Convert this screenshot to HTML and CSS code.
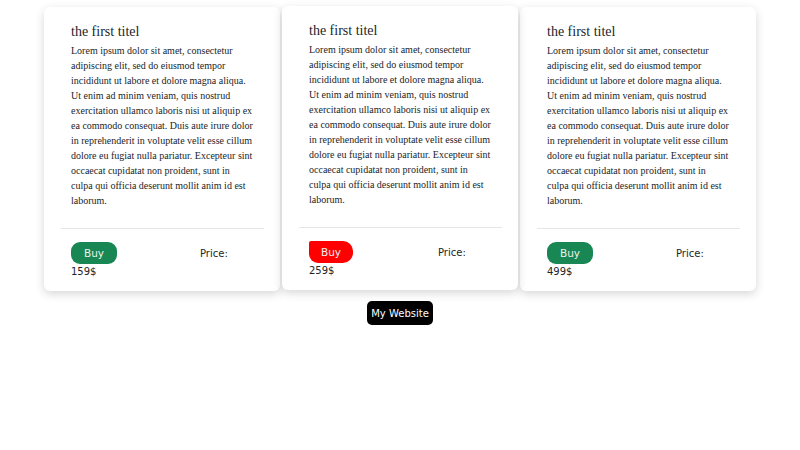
FILE: index.html
```html
<!DOCTYPE html>
<html lang="en">
<head>
    <meta charset="UTF-8">
    <meta name="viewport" content="width=device-width, initial-scale=1.0">
    <title>Cards</title>
    <link rel="stylesheet" href="styles.css">
</head>
<body>

<!-- Product cards -->
<div class="cards">
    <div class="card">
        <div class="card-body">
            <h5 class="card-title">the first titel</h5>
            <p class="card-text">Lorem ipsum dolor sit amet, consectetur adipiscing elit, sed do eiusmod tempor incididunt ut labore et dolore magna aliqua. Ut enim ad minim veniam, quis nostrud exercitation ullamco laboris nisi ut aliquip ex ea commodo consequat. Duis aute irure dolor in reprehenderit in voluptate velit esse cillum dolore eu fugiat nulla pariatur. Excepteur sint occaecat cupidatat non proident, sunt in culpa qui officia deserunt mollit anim id est laborum.</p>
        </div>
        <hr>
        <div class="card-footer">
            <button class="btn-buy">Buy</button>
            <span class="price-label">Price:</span>
            <span class="price">159$</span>
        </div>
    </div>

    <div class="card card-active">
        <div class="card-body">
            <h5 class="card-title">the first titel</h5>
            <p class="card-text">Lorem ipsum dolor sit amet, consectetur adipiscing elit, sed do eiusmod tempor incididunt ut labore et dolore magna aliqua. Ut enim ad minim veniam, quis nostrud exercitation ullamco laboris nisi ut aliquip ex ea commodo consequat. Duis aute irure dolor in reprehenderit in voluptate velit esse cillum dolore eu fugiat nulla pariatur. Excepteur sint occaecat cupidatat non proident, sunt in culpa qui officia deserunt mollit anim id est laborum.</p>
        </div>
        <hr>
        <div class="card-footer">
            <button class="btn-buy btn-red">Buy</button>
            <span class="price-label">Price:</span>
            <span class="price">259$</span>
        </div>
    </div>

    <div class="card">
        <div class="card-body">
            <h5 class="card-title">the first titel</h5>
            <p class="card-text">Lorem ipsum dolor sit amet, consectetur adipiscing elit, sed do eiusmod tempor incididunt ut labore et dolore magna aliqua. Ut enim ad minim veniam, quis nostrud exercitation ullamco laboris nisi ut aliquip ex ea commodo consequat. Duis aute irure dolor in reprehenderit in voluptate velit esse cillum dolore eu fugiat nulla pariatur. Excepteur sint occaecat cupidatat non proident, sunt in culpa qui officia deserunt mollit anim id est laborum.</p>
        </div>
        <hr>
        <div class="card-footer">
            <button class="btn-buy">Buy</button>
            <span class="price-label">Price:</span>
            <span class="price">499$</span>
        </div>
    </div>
</div>

<div class="site-link">
    <button class="btn-site">My Website</button>
</div>

</body>
</html>
```

FILE: styles.css
```css
body {
    margin: 0;
    font-family: "DejaVu Sans", sans-serif;
    background-color: #ffffff;
    color: #212529;
}

/* Card row */
.cards {
    display: flex;
    justify-content: center;
    gap: 2px;
    padding-top: 7px;
}

.card {
    width: 236px;
    background-color: #ffffff;
    border-radius: 6px;
    box-shadow: 0 3px 10px rgba(0, 0, 0, 0.16);
    padding-bottom: 12px;
}

.card-active {
    transform: translateY(-1px);
}

.card-body {
    padding: 15px 26.5px 0 27px;
}

.card-title {
    font-family: "Liberation Serif", serif;
    font-size: 14px;
    font-weight: normal;
    line-height: 19px;
    margin: 0 0 2px;
}

.card-text {
    font-family: "Liberation Serif", serif;
    font-size: 10px;
    line-height: 15px;
    margin: 0;
}

hr {
    border: none;
    border-top: 1px solid #e6e6e6;
    margin: 20px 16px 13px 17px;
}

/* Footer with button and price */
.card-footer {
    display: grid;
    grid-template-columns: 129px auto;
    align-items: center;
    padding-left: 27px;
    font-size: 10px;
}

.btn-buy {
    width: 46px;
    height: 22px;
    padding: 0;
    border: none;
    border-radius: 9px;
    background-color: #198754;
    color: #e8f3ec;
    font-family: "DejaVu Sans", sans-serif;
    font-size: 10.5px;
}

.btn-red {
    width: 44px;
    background-color: #ff0000;
    border-radius: 2px 10px 10px 9px;
}

.price {
    line-height: 15px;
}

/* Link button under the cards */
.site-link {
    text-align: center;
    margin-top: 10px;
}

.btn-site {
    height: 24px;
    padding: 0 4px;
    border: none;
    border-radius: 5px;
    background-color: #000000;
    color: #ffffff;
    font-family: "DejaVu Sans", sans-serif;
    font-size: 10px;
}
```
